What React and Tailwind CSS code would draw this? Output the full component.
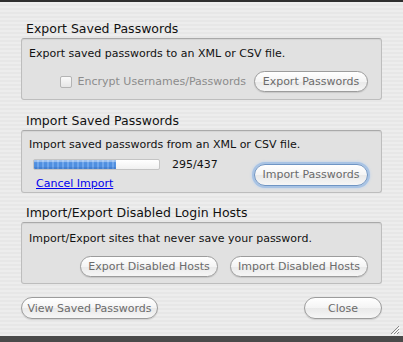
import React from 'react';

const font = { fontFamily: '"Lucida Grande", "DejaVu Sans", sans-serif' };

function AquaButton({ children, className = '', focused = false }) {
  return (
    <button
      className={
        'h-[21px] rounded-full border text-[11px] leading-[19px] text-[#6b6b6b] whitespace-nowrap bg-[linear-gradient(#ffffff,#f4f4f4_50%,#e9e9e9_51%,#f6f6f6)] ' +
        (focused
          ? 'border-[#6f95c4] shadow-[0_0_0_2px_#a8c3e4,0_0_3px_2px_#bcd2ee] '
          : 'border-[#9c9c9c] shadow-[0_1px_1px_rgba(0,0,0,0.12)] ') +
        className
      }
    >
      {children}
    </button>
  );
}

function Heading({ children }) {
  return <div className="pl-[5px] text-[12.5px] leading-[18px] text-[#111]">{children}</div>;
}

function Group({ children, className = '' }) {
  return (
    <div
      className={
        'rounded-[3px] border border-[#bdbdbd] border-t-[#a9a9a9] bg-[#e1e1e1] shadow-[inset_0_1px_1px_rgba(0,0,0,0.06)] ' +
        className
      }
    >
      {children}
    </div>
  );
}

export default function App() {
  return (
    <div
      style={font}
      className="relative w-[403px] h-[342px] overflow-hidden border-t-2 border-t-[#2e2e2e] border-b-[6px] border-b-[#4a4a4a] bg-[repeating-linear-gradient(0deg,#ededed_0px,#ededed_2px,#e7e7e7_2px,#e7e7e7_4px)]"
    >
      <div className="flex flex-col pl-[21px] pt-[18px] w-[382px]">
        {/* Export */}
        <Heading>Export Saved Passwords</Heading>
        <Group className="h-[62px] flex flex-col">
          <div className="pl-[7px] pt-[7px] text-[11px] leading-[15px] text-[#111]">
            Export saved passwords to an XML or CSV file.
          </div>
          <div className="flex items-center justify-end gap-[8px] pr-[13px] mt-[10px]">
            <div className="flex items-center gap-[6px]">
              <span className="w-[12px] h-[12px] rounded-[2px] border border-[#b4b4b4] bg-[linear-gradient(#fafafa,#e6e6e6)]" />
              <span className="text-[11px] leading-[15px] text-[#8c8c8c]">Encrypt Usernames/Passwords</span>
            </div>
            <AquaButton className="w-[114px]">Export Passwords</AquaButton>
          </div>
        </Group>

        {/* Import */}
        <div className="mt-[12px]">
          <Heading>Import Saved Passwords</Heading>
        </div>
        <Group className="h-[63px] flex flex-col">
          <div className="pl-[7px] pt-[6px] text-[11px] leading-[15px] text-[#111] whitespace-nowrap">
            Import saved passwords from an XML or CSV file.
          </div>
          <div className="flex justify-between pr-[13px]">
            <div className="flex flex-col">
              <div className="flex items-center pl-[11px] mt-[5px]">
                <div className="w-[127px] h-[11px] rounded-[2px] border border-[#c4c4c4] bg-[linear-gradient(#ffffff,#f1f1f1)] overflow-hidden">
                  <div className="h-full w-[82px] bg-[repeating-linear-gradient(90deg,#4f8fe0_0px,#4f8fe0_3px,#6fa6ec_3px,#6fa6ec_5px)] shadow-[inset_0_2px_1px_rgba(255,255,255,0.45),inset_0_-2px_1px_rgba(0,40,120,0.15)]" />
                </div>
                <span className="ml-[12px] text-[11px] leading-[15px] text-[#111]">295/437</span>
              </div>
              <div className="pl-[14px] mt-[4px] text-[11px] leading-[15px] text-[#0000ee] underline">Cancel Import</div>
            </div>
            <div className="pt-[9px]">
              <AquaButton focused className="w-[114px] h-[22px]">Import Passwords</AquaButton>
            </div>
          </div>
        </Group>

        {/* Hosts */}
        <div className="mt-[11px]">
          <Heading>Import/Export Disabled Login Hosts</Heading>
        </div>
        <Group className="h-[62px] flex flex-col">
          <div className="pl-[7px] pt-[8px] text-[11px] leading-[15px] text-[#111]">
            Import/Export sites that never save your password.
          </div>
          <div className="flex items-center justify-end gap-[12px] pr-[13px] mt-[10px]">
            <AquaButton className="w-[138px]">Export Disabled Hosts</AquaButton>
            <AquaButton className="w-[138px]">Import Disabled Hosts</AquaButton>
          </div>
        </Group>

        {/* Bottom */}
        <div className="flex justify-between mt-[13px]">
          <AquaButton className="w-[137px] h-[22px]">View Saved Passwords</AquaButton>
          <AquaButton className="w-[78px] h-[22px]">Close</AquaButton>
        </div>
      </div>

      {/* resize grip */}
      <svg className="absolute right-[3px] bottom-[1px]" width="11" height="11" viewBox="0 0 11 11">
        <line x1="10" y1="2" x2="2" y2="10" stroke="#8a8a8a" strokeWidth="1" />
        <line x1="10" y1="5" x2="5" y2="10" stroke="#8a8a8a" strokeWidth="1" />
        <line x1="10" y1="8" x2="8" y2="10" stroke="#8a8a8a" strokeWidth="1" />
        <line x1="11" y1="3" x2="3" y2="11" stroke="#ffffff" strokeWidth="1" />
        <line x1="11" y1="6" x2="6" y2="11" stroke="#ffffff" strokeWidth="1" />
      </svg>
    </div>
  );
}
